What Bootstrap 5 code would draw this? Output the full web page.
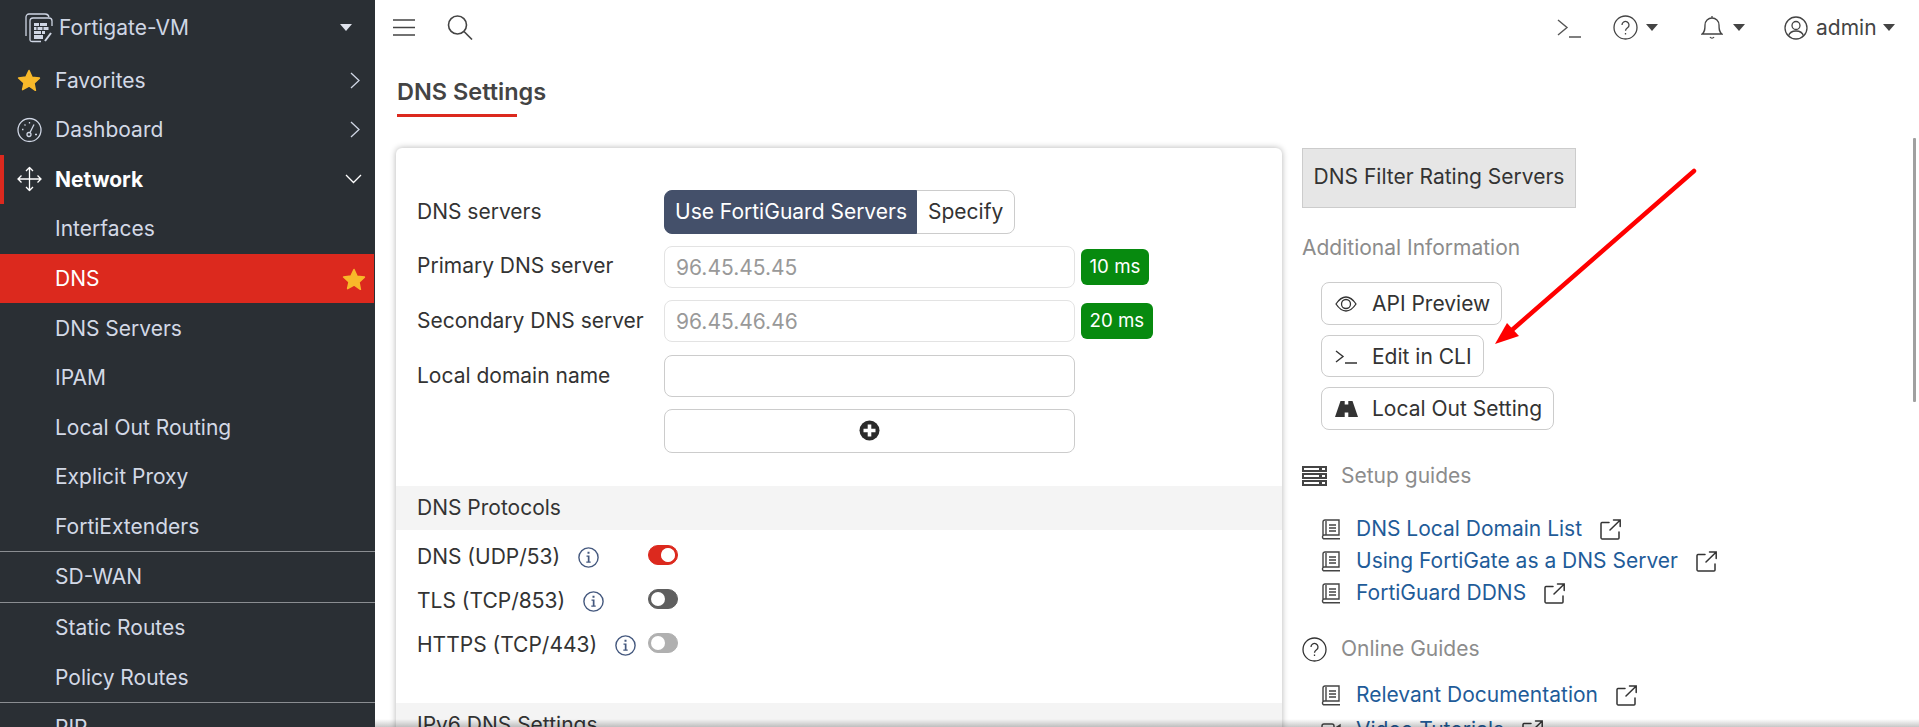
<!DOCTYPE html>
<html lang="en"><head><meta charset="utf-8"><title>DNS Settings</title>
<link href="https://cdn.jsdelivr.net/npm/bootstrap@5.3.0/dist/css/bootstrap.min.css" rel="stylesheet">
<style>
html,body{height:100%;overflow:hidden}
body{font-family:Inter,"Liberation Sans",sans-serif;font-size:21px;color:#333;position:relative;background:#fff}
svg{display:block;flex:none}
.fg-shell{height:727px}
.fg-side{width:375px;flex:none;background:#2a2f34;color:#cfd6e4;font-size:21px;overflow:hidden}
.fg-side>*{flex:none}
.fg-head{height:55.500px;padding:0 23px 0 23px}
.fg-head span{font-size:21px;margin-left:5px}
.fg-tri{width:0;height:0;border-left:6px solid transparent;border-right:6px solid transparent;border-top:7px solid currentColor;flex:none}
.fg-item{height:49.600px;padding:0 14px 0 55px;position:relative;color:#d3d9e6}
.fg-item .fg-ico{position:absolute;left:17px;top:50%;transform:translateY(-50%)}
.fg-on{color:#fff;font-weight:700}
.fg-on::before{content:"";position:absolute;left:0;top:0;bottom:0;width:4px;background:#dc291e}
.fg-on>svg:last-child{margin-right:-1px}
.fg-cur{background:#dc291e;color:#fff;margin-right:1px}
.fg-sep{border-top:1px solid #8a8d91;height:50.600px}
.fg-main{position:relative;min-width:0;overflow:hidden}
.fg-main>*{flex:none}
.fg-main::after{content:"";position:absolute;left:0;right:0;bottom:0;height:8px;background:linear-gradient(to bottom,rgba(0,0,0,0),rgba(0,0,0,.22))}
.fg-top{height:55px;padding:0 24px 0 18px;color:#444}
.fg-title{font-size:23.500px;font-weight:600;color:#444;margin-left:22px;margin-top:18px;width:120px;white-space:nowrap;height:44px;border-bottom:3px solid #dc291e;line-height:38px}
.fg-body{padding:31px 0 0 21px}
.fg-form{width:886px;flex:none;height:640px;border-radius:6px;box-shadow:0 0 6px rgba(0,0,0,.3);padding-top:42px;background:#fff}
.fg-row{padding-left:21px}
.fg-lab{width:247px;flex:none;color:#333}
.fg-lab-up{padding-bottom:2px}
.fg-seg{height:44px;margin-bottom:12px}
.fg-seg .btn{font-size:21px;padding:0 11px;height:44px;line-height:42px;color:#333;border:1px solid #ccc;background:#fff}
.fg-seg .btn.active{background:#44506a;border-color:#44506a;color:#fff;padding:0 9px 0 10px}
.fg-seg .btn:first-child{border-radius:8px 0 0 8px}
.fg-seg .btn:last-child{border-radius:0 8px 8px 0}
.fg-in{width:411px;height:42px;font-size:21px;padding:0 11px;border-radius:8px;border-color:#ccc;color:#333;flex:none}
.fg-in::placeholder{color:#999;opacity:1}
.fg-in:disabled{background:#fff;border-color:#e3e3e3}
.fg-ms{background:#078a0f;font-size:18.700px;font-weight:400;border-radius:6px;height:36px;line-height:36px;padding:0 8.500px;margin-left:6px}
.fg-add{width:411px;height:44px;border:1px solid #ccc;border-radius:8px;background:#fff;padding:0 0 2px}
.fg-sec{height:44px;background:#f4f4f4;padding-left:21px;color:#333}
.fg-pro{height:44px;padding-left:21px}
.fg-prolab{width:231px;gap:18px}
.fg-sw{position:relative;width:30px;height:20px}
.fg-sw .form-check-input{width:30px;height:20px;margin:0;float:none;background-color:#dc291e;border:1.500px solid #dc291e;--bs-form-switch-bg:none}
.fg-knob{position:absolute;top:3px;width:14px;height:14px;background:#fff;border-radius:50%;pointer-events:none}
.fg-aside{padding-left:20px;flex:1;min-width:0}
.fg-rate{height:60px;width:274px;background:#e6e6e6;border:1px solid #ccc;border-radius:0;font-size:21px;color:#333;padding:0 0 3px;line-height:54px}
.fg-gray{color:#8c8c8c}
.fg-act{color:#333;border:1px solid #ccc;border-radius:8px;background:#fff;padding:1px 11px 0 13px;height:43px;margin:0 0 10px 19px;width:fit-content}
.fg-act svg{margin-right:15px}
.fg-act svg.fg-road{margin-right:14px}
.fg-lnk{height:32px;margin-left:19px;color:#1f5c99;white-space:nowrap}
.fg-lnk a{color:#1f5c99;text-decoration:none;margin:0 18px 0 15px}
.fg-bar{position:absolute;right:3px;top:138px;width:3px;height:264px;background:#a0a0a0;border-radius:1px}
.fg-arrow{position:absolute;left:0;top:0;pointer-events:none}
.fg-admin{margin-left:8px;width:67px;color:#444;flex:none}
</style></head>
<body>
<svg width="0" height="0" style="position:absolute">
<symbol id="bk" viewBox="0 0 20 21"><g fill="none" stroke="#444" stroke-width="1.400"><path d="M2 17V3a2 2 0 0 1 2-2h14v15H3.500A1.800 1.800 0 0 0 1.500 18a1.600 1.600 0 0 0 2 1.700H19"/><path d="M5 2v14M8 6h7M8 9h7M8 12h7"/></g></symbol>
<symbol id="ex" viewBox="0 0 21 21"><g fill="none" stroke="#333" stroke-width="1.500" stroke-linecap="round"><path d="M9 3.500H2a1.200 1.200 0 0 0-1 1V19a1.200 1.200 0 0 0 1 1h16a1 1 0 0 0 1-1v-6"/><path d="M10 11 20 1.200M13.500 1H20.200V7.500"/></g></symbol>
<symbol id="inf" viewBox="0 0 21 21"><circle cx="10.500" cy="10.500" r="9.600" fill="none" stroke="#44587e" stroke-width="1.400"/><path fill="#44587e" d="M9.500 4.700h2v2h-2zM8.500 8.500h3v6h1.200v1.200H8.300v-1.200h1.500V9.700H8.500z"/></symbol>
<symbol id="str" viewBox="0 0 24 22"><path fill="#f8b92a" stroke="#f8b92a" stroke-width="1.500" stroke-linejoin="round" d="M12 1.500l3.100 6.700 7.300.9-5.400 5 1.400 7.200L12 17l-6.400 3.600L7 13.900l-5.400-5 7.300-.9z"/></symbol>
</svg>
<div class="fg-shell d-flex">
<nav class="fg-side d-flex flex-column">
 <div class="fg-head d-flex align-items-center">
  <svg width="31" height="31" viewBox="0 0 31 31" fill="none" stroke="#cfd6e4" stroke-width="1.300"><path d="M3 24V5a3 3 0 0 1 3-3h16a4 4 0 0 1 4 3"/><path d="M7 28V9a3 3 0 0 1 3-3h16a3 3 0 0 1 3 3v5"/><path d="M7 28c0 1 1 1.500 2 1.500h9"/><path fill="#cfd6e4" stroke="none" d="M11 11h5v3h-5zM17 11h7v3h-7zM11 15h2.500v3H11zM14.500 15h5v3h-5zM20.500 15h5v3h-5zM11 19h7v3h-7zM19 19h3v3h-3zM11 23h9v4h-9z"/><path stroke-width="2" d="M22 29l6-8"/></svg>
  <span class="flex-grow-1">Fortigate-VM</span><i class="fg-tri" style="color:#dfe3ec"></i>
 </div>
 <div class="fg-item d-flex align-items-center justify-content-between"><svg class="fg-ico" width="24" height="22"><use href="#str"/></svg><span>Favorites</span><svg width="12" height="17" viewBox="0 0 12 17" fill="none" stroke="#cfd6e4" stroke-width="1.300"><path d="M2 1l8 7.500L2 16"/></svg></div>
 <div class="fg-item d-flex align-items-center justify-content-between"><svg class="fg-ico" width="25" height="25" viewBox="0 0 25 25" fill="none" stroke="#cfd6e4" stroke-width="1.300"><circle cx="12.500" cy="12.500" r="11.500"/><circle cx="12" cy="17" r="2"/><path d="M13 15l4-8M5 12h1.500M7.500 7l1 1M12.500 4.500V6M18 17h2"/></svg><span>Dashboard</span><svg width="12" height="17" viewBox="0 0 12 17" fill="none" stroke="#cfd6e4" stroke-width="1.300"><path d="M2 1l8 7.500L2 16"/></svg></div>
 <div class="fg-item fg-on d-flex align-items-center justify-content-between"><svg class="fg-ico" width="25" height="25" viewBox="0 0 25 25" fill="none" stroke="#fff" stroke-width="1.300"><path d="M12.500 1v23M1 12.500h23M9 4.500l3.500-3.500L16 4.500M9 20.500l3.500 3.500 3.500-3.500M4.500 9L1 12.500 4.500 16M20.500 9l3.500 3.500-3.500 3.500"/></svg><span>Network</span><svg width="17" height="10" viewBox="0 0 17 10" fill="none" stroke="#fff" stroke-width="1.300"><path d="M1 1l7.500 7.500L16 1"/></svg></div>
 <div class="fg-item d-flex align-items-center">Interfaces</div>
 <div class="fg-item fg-cur d-flex align-items-center justify-content-between" style="padding-right:8px">DNS<svg width="24" height="22"><use href="#str"/></svg></div>
 <div class="fg-item d-flex align-items-center">DNS Servers</div>
 <div class="fg-item d-flex align-items-center">IPAM</div>
 <div class="fg-item d-flex align-items-center">Local Out Routing</div>
 <div class="fg-item d-flex align-items-center">Explicit Proxy</div>
 <div class="fg-item d-flex align-items-center">FortiExtenders</div>
 <div class="fg-item fg-sep d-flex align-items-center">SD-WAN</div>
 <div class="fg-item fg-sep d-flex align-items-center">Static Routes</div>
 <div class="fg-item d-flex align-items-center">Policy Routes</div>
 <div class="fg-item fg-sep d-flex align-items-center">PIP</div>
</nav>
<main class="fg-main flex-grow-1 d-flex flex-column">
 <header class="fg-top d-flex align-items-center">
  <svg width="22" height="17" viewBox="0 0 22 17" fill="none" stroke="#444" stroke-width="1.400"><path d="M0 1h22M0 8.500h22M0 16h22"/></svg>
  <svg style="margin-left:32px" width="26" height="25" viewBox="0 0 26 25" fill="none" stroke="#444" stroke-width="1.600"><circle cx="10.500" cy="10" r="9"/><path d="M17 16.500l8 8"/></svg>
  <div class="ms-auto d-flex align-items-center">
   <svg width="24" height="22" viewBox="0 0 24 22" fill="none" stroke="#555" stroke-width="1.400"><path d="M1 3l9 7.500L1 18M12 20h12"/></svg>
   <svg style="margin-left:32px" width="25" height="25" viewBox="0 0 25 25" fill="none" stroke="#444" stroke-width="1.300"><circle cx="12.500" cy="12.500" r="11.500"/><path d="M9 10a3.500 3.500 0 1 1 5.500 2.800c-1.200.8-2 1.400-2 3"/><path d="M12.500 18v1.500"/></svg>
   <i class="fg-tri" style="margin-left:8px"></i>
   <svg style="margin-left:43px" width="22" height="25" viewBox="0 0 22 25" fill="none" stroke="#444" stroke-width="1.300"><path d="M1 19c3-2 3-5 3-9a7 7 0 0 1 14 0c0 4 0 7 3 9zM11 1v2M9 22c1 1.500 3 1.500 4 0"/></svg>
   <i class="fg-tri" style="margin-left:10px"></i>
   <svg style="margin-left:39px" width="24" height="24" viewBox="0 0 24 24" fill="none" stroke="#444" stroke-width="1.300"><circle cx="12" cy="12" r="11"/><circle cx="12" cy="9.500" r="4"/><path d="M4.500 20c1-3.500 3.500-5 7.500-5s6.500 1.500 7.500 5"/></svg>
   <span class="fg-admin">admin</span>
   <i class="fg-tri"></i>
  </div>
 </header>
 <div class="fg-title">DNS Settings</div>
 <div class="fg-body d-flex">
  <section class="fg-form">
   <div class="fg-row d-flex align-items-center fg-seg"><label class="fg-lab">DNS servers</label>
    <div class="btn-group fg-seg m-0"><button class="btn active">Use FortiGuard Servers</button><button class="btn">Specify</button></div></div>
   <div class="fg-row d-flex align-items-center" style="margin-bottom:12px"><label class="fg-lab fg-lab-up">Primary DNS server</label><input class="form-control fg-in" disabled placeholder="96.45.45.45"><span class="badge fg-ms">10 ms</span></div>
   <div class="fg-row d-flex align-items-center" style="margin-bottom:13px"><label class="fg-lab">Secondary DNS server</label><input class="form-control fg-in" disabled placeholder="96.45.46.46"><span class="badge fg-ms">20 ms</span></div>
   <div class="fg-row d-flex align-items-center" style="margin-bottom:12px"><label class="fg-lab">Local domain name</label><input class="form-control fg-in"></div>
   <div class="fg-row d-flex align-items-center" style="margin-bottom:33px"><span class="fg-lab"></span><button class="fg-add d-flex align-items-center justify-content-center"><svg width="21" height="21" viewBox="0 0 21 21"><circle cx="10.500" cy="10.500" r="10" fill="#2b2b2b"/><path fill="#fff" d="M8.700 4.500h3.600v4.200h4.200v3.600h-4.200v4.200H8.700v-4.200H4.500V8.700h4.200z"/></svg></button></div>
   <div class="fg-sec d-flex align-items-center" style="margin-bottom:5px">DNS Protocols</div>
   <div class="fg-pro d-flex align-items-center"><div class="fg-prolab d-flex align-items-center"><span>DNS (UDP/53)</span><svg width="21" height="21"><use href="#inf"/></svg></div><div class="form-check form-switch fg-sw p-0 m-0"><input class="form-check-input" type="checkbox" role="switch" checked><i class="fg-knob" style="left:13px"></i></div></div>
   <div class="fg-pro d-flex align-items-center"><div class="fg-prolab d-flex align-items-center"><span>TLS (TCP/853)</span><svg width="21" height="21"><use href="#inf"/></svg></div><div class="form-check form-switch fg-sw p-0 m-0"><input class="form-check-input" style="background-color:#5f5f5f;border-color:#5f5f5f" type="checkbox" role="switch"><i class="fg-knob" style="left:3px"></i></div></div>
   <div class="fg-pro d-flex align-items-center"><div class="fg-prolab d-flex align-items-center"><span>HTTPS (TCP/443)</span><svg width="21" height="21"><use href="#inf"/></svg></div><div class="form-check form-switch fg-sw p-0 m-0"><input class="form-check-input" style="background-color:#b0b0b0;border-color:#b0b0b0" type="checkbox" role="switch"><i class="fg-knob" style="left:3px"></i></div></div>
   <div class="fg-sec d-flex align-items-center" style="margin-top:36px">IPv6 DNS Settings</div>
  </section>
  <aside class="fg-aside">
   <button class="btn fg-rate d-block">DNS Filter Rating Servers</button>
   <div class="fg-gray" style="margin:28px 0 22px 0;line-height:24px">Additional Information</div>
   <div class="fg-act d-flex align-items-center"><svg width="22" height="16" viewBox="0 0 22 16" fill="none" stroke="#333" stroke-width="1.300"><path d="M1 8c3-4.500 6-7 10-7s7 2.500 10 7c-3 4.500-6 7-10 7s-7-2.500-10-7z"/><circle cx="11" cy="8" r="4.500"/></svg>API Preview</div>
   <div class="fg-act d-flex align-items-center" style="height:42px"><svg width="22" height="14" viewBox="0 0 22 14" fill="none" stroke="#333" stroke-width="1.400"><path d="M1 1l7 5.500L1 12M10 13h12"/></svg>Edit in CLI</div>
   <div class="fg-act d-flex align-items-center"><svg class="fg-road" width="23" height="16" viewBox="0 0 23 16"><path fill="#333" d="M5.500 0h4.200v3.500h3.600V0h4.200L23 16h-9.700v-4.500H9.700V16H0zM9.700 6h3.600v3.500H9.700z"/></svg>Local Out Setting</div>
   <div class="fg-gray d-flex align-items-center" style="margin:34px 0 25px 0;height:24px"><svg width="25" height="20" viewBox="0 0 25 20" style="margin-right:14px"><path fill="#444" d="M0 0h25v6H0zM0 7h25v6H0zM0 14h25v6H0z"/><path fill="#fff" d="M2 2h15v2H2zM2 9h15v2H2zM2 16h15v2H2zM20 2h3v2h-3zM20 9h3v2h-3zM20 16h3v2h-3z"/></svg>Setup guides</div>
   <div class="fg-lnk d-flex align-items-center"><svg width="20" height="21"><use href="#bk"/></svg><a href="#">DNS Local Domain List</a><svg width="21" height="21"><use href="#ex"/></svg></div>
   <div class="fg-lnk d-flex align-items-center"><svg width="20" height="21"><use href="#bk"/></svg><a href="#">Using FortiGate as a DNS Server</a><svg width="21" height="21"><use href="#ex"/></svg></div>
   <div class="fg-lnk d-flex align-items-center"><svg width="20" height="21"><use href="#bk"/></svg><a href="#">FortiGuard DDNS</a><svg width="21" height="21"><use href="#ex"/></svg></div>
   <div class="fg-gray d-flex align-items-center" style="margin:28px 0 18px 0;height:24px"><svg width="25" height="25" viewBox="0 0 25 25" fill="none" stroke="#333" stroke-width="1.300" style="margin-right:14px"><circle cx="12.500" cy="12.500" r="11.500"/><path d="M9 10a3.500 3.500 0 1 1 5.500 2.800c-1.200.8-2 1.400-2 3"/><path d="M12.500 17.500V19"/></svg>Online Guides</div>
   <div class="fg-lnk d-flex align-items-center"><svg width="20" height="21"><use href="#bk"/></svg><a href="#">Relevant Documentation</a><svg width="21" height="21"><use href="#ex"/></svg></div>
   <div class="fg-lnk d-flex align-items-center" style="margin-top:3px"><svg width="20" height="16" viewBox="0 0 20 16" fill="none" stroke="#444" stroke-width="1.400"><rect x="1" y="2" width="12" height="12" rx="2"/><path d="M13 7l6-4v10l-6-4"/></svg><a href="#">Video Tutorials</a><svg width="21" height="21"><use href="#ex"/></svg></div>
  </aside>
 </div>
</main>
</div>
<div class="fg-bar"></div>
<svg class="fg-arrow" width="1919" height="727"><path d="M1694 171L1512 330" stroke="#f00" stroke-width="4.500" stroke-linecap="round"/><polygon fill="#f00" points="1495,344 1507,323 1519,336"/></svg>
</body></html>
